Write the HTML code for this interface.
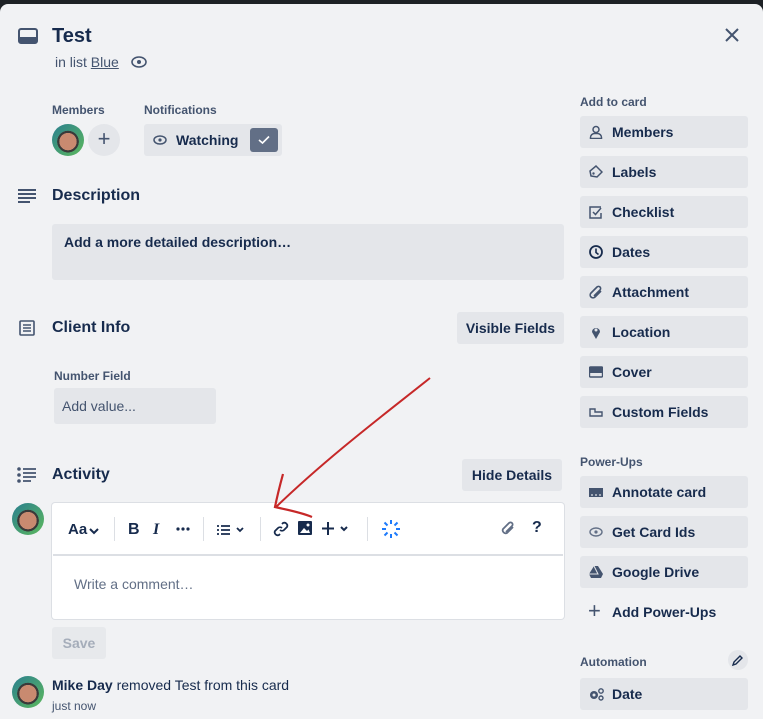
<!DOCTYPE html><html style="width:763px;height:719px;overflow:hidden"><head><style>
*{box-sizing:border-box;margin:0;padding:0}
body{width:763px;height:719px;overflow:hidden;background:#1d2125;font-family:"Liberation Sans",sans-serif;color:#172b4d;position:relative}
.card{position:absolute;left:0;top:4px;width:763px;height:715px;background:#f1f2f4;border-radius:8px 8px 0 0;overflow:hidden}
.a{position:absolute}
.b{position:absolute;background:#e4e6ea;border-radius:3px;font-size:14px;font-weight:bold;color:#172b4d}
.sb{left:580px;width:168px;height:32px;padding-left:32px;line-height:32px}
.sb svg{position:absolute;left:9px;top:9px}
.lbl{font-size:12px;font-weight:bold;color:#44546f}
.h{font-size:16px;font-weight:bold}
.av{position:absolute;width:32px;height:32px;border-radius:50%;background:radial-gradient(circle at 50% 55%,#c98a70 0 36%,#3a3a3a 37% 45%,transparent 46%),linear-gradient(135deg,#2a7f8f,#5cb85c);overflow:hidden}
</style></head><body>
<div class="card">
<svg class="a" style="left:18px;top:24px" width="20" height="16"><rect x="1" y="1" width="18" height="14" rx="2" fill="none" stroke="#44546f" stroke-width="2"/><rect x="1" y="9" width="18" height="6" fill="#44546f"/></svg>
<div class="a" style="left:52px;top:21px;font-size:20px;font-weight:bold">Test</div>
<div class="a" style="left:55px;top:50px;font-size:14px;color:#44546f">in list <u>Blue</u></div>
<svg class="a" style="left:131px;top:52px" width="16" height="12"><ellipse cx="8" cy="6" rx="7" ry="5" fill="none" stroke="#44546f" stroke-width="1.6"/><circle cx="8" cy="6" r="2" fill="#44546f"/></svg>
<svg class="a" style="left:725px;top:24px" width="14" height="14"><path d="M1 1L13 13M13 1L1 13" stroke="#44546f" stroke-width="2"/></svg>
<div class="a lbl" style="left:52px;top:99px">Members</div>
<div class="a lbl" style="left:144px;top:99px">Notifications</div>
<div class="av" style="left:52px;top:120px"></div>
<div class="a" style="left:88px;top:120px;width:32px;height:32px;border-radius:50%;background:#e4e6ea;text-align:center;line-height:30px;font-size:22px;color:#44546f">+</div>
<div class="b" style="left:144px;top:120px;width:138px;height:32px;line-height:32px;padding-left:32px">Watching</div>
<svg class="a" style="left:153px;top:131px" width="14" height="10"><ellipse cx="7" cy="5" rx="6" ry="4" fill="none" stroke="#44546f" stroke-width="1.5"/><circle cx="7" cy="5" r="1.6" fill="#44546f"/></svg>
<div class="a" style="left:250px;top:124px;width:28px;height:24px;background:#626f86;border-radius:3px"></div>
<svg class="a" style="left:258px;top:131px" width="12" height="10"><path d="M1 5L4.5 8L11 1.5" fill="none" stroke="#fff" stroke-width="1.6"/></svg>
<svg class="a" style="left:18px;top:185px" width="18" height="14"><path d="M0 1H18M0 5H18M0 9H18M0 13H12" stroke="#44546f" stroke-width="2"/></svg>
<div class="a h" style="left:52px;top:183px">Description</div>
<div class="b" style="left:52px;top:220px;width:512px;height:56px;padding:10px 12px;font-size:14px">Add a more detailed description…</div>
<svg class="a" style="left:19px;top:316px" width="16" height="16"><rect x="1" y="1" width="14" height="14" rx="1" fill="none" stroke="#44546f" stroke-width="1.6"/><path d="M4 5H12M4 8H12M4 11H12" stroke="#44546f" stroke-width="1.4"/></svg>
<div class="a h" style="left:52px;top:315px">Client Info</div>
<div class="b" style="left:457px;top:308px;width:107px;height:32px;line-height:32px;text-align:center">Visible Fields</div>
<div class="a lbl" style="left:54px;top:365px">Number Field</div>
<div class="b" style="left:54px;top:384px;width:162px;height:36px;line-height:36px;padding-left:8px;font-weight:normal;color:#44546f">Add value...</div>
<svg class="a" style="left:17px;top:463px" width="20" height="16"><circle cx="2" cy="2" r="1.8" fill="#44546f"/><circle cx="2" cy="8" r="1.8" fill="#44546f"/><circle cx="2" cy="14" r="1.8" fill="#44546f"/><path d="M6 2H19M6 6H19M6 10H19M6 14H14" stroke="#44546f" stroke-width="1.8"/></svg>
<div class="a h" style="left:52px;top:462px">Activity</div>
<div class="b" style="left:462px;top:455px;width:100px;height:32px;line-height:32px;text-align:center">Hide Details</div>
<div class="av" style="left:12px;top:499px"></div>
<div class="a" style="left:52px;top:499px;width:512px;height:116px;background:#fff;border-radius:3px;box-shadow:0 0 0 1px #dcdfe4"></div>
<div class="a" style="left:53px;top:550px;width:510px;height:2px;background:#dcdfe4"></div>
<div class="a" style="left:68px;top:517px;font-size:15px;font-weight:bold">Aa</div>
<svg class="a" style="left:89px;top:523px" width="10" height="8"><path d="M1 2l4 4 4-4" stroke="#172b4d" stroke-width="2" fill="none"/></svg>
<div class="a" style="left:114px;top:513px;width:1px;height:24px;background:#dcdfe4"></div>
<div class="a" style="left:128px;top:517px;font-size:16px;font-weight:bold">B</div>
<div class="a" style="left:153px;top:517px;font-size:16px;font-family:'Liberation Serif';font-style:italic;font-weight:bold">I</div>
<svg class="a" style="left:176px;top:523px" width="14" height="4"><circle cx="2" cy="2" r="1.6" fill="#172b4d"/><circle cx="7" cy="2" r="1.6" fill="#172b4d"/><circle cx="12" cy="2" r="1.6" fill="#172b4d"/></svg>
<div class="a" style="left:203px;top:513px;width:1px;height:24px;background:#dcdfe4"></div>
<svg class="a" style="left:217px;top:521px" width="30" height="10"><path d="M0 1h2M0 5h2M0 9h2M4 1h9M4 5h9M4 9h9M20 3l3 3 3-3" stroke="#172b4d" stroke-width="1.8" fill="none"/></svg>
<div class="a" style="left:260px;top:513px;width:1px;height:24px;background:#dcdfe4"></div>
<svg class="a" style="left:273px;top:517px" width="16" height="16"><path d="M7 9a3 3 0 0 0 4 0l3-3a3 3 0 0 0-4-4l-1 1M9 7a3 3 0 0 0-4 0l-3 3a3 3 0 0 0 4 4l1-1" fill="none" stroke="#172b4d" stroke-width="1.8"/></svg>
<svg class="a" style="left:298px;top:517px" width="14" height="14"><rect width="14" height="14" rx="1" fill="#172b4d"/><path d="M2 12L6 7L9 10L10.5 8.5L12 12Z" fill="#fff"/><circle cx="10" cy="4" r="1.5" fill="#fff"/></svg>
<svg class="a" style="left:322px;top:518px" width="28" height="14"><path d="M6 0V13M0 6.5H12M19 5l3 3 3-3" stroke="#172b4d" stroke-width="2" fill="none"/></svg>
<div class="a" style="left:367px;top:513px;width:1px;height:24px;background:#dcdfe4"></div>
<svg class="a" style="left:382px;top:516px" width="18" height="18"><path d="M9 0v4M9 14v4M0 9h4M14 9h4M2.5 2.5l3 3M12.5 12.5l3 3M15.5 2.5l-3 3M5.5 12.5l-3 3" stroke="#1d7afc" stroke-width="2"/></svg>
<svg class="a" style="left:500px;top:516px" width="16" height="17"><path d="M13 7L7 13a3 3 0 0 1-4-4l6-6a2 2 0 0 1 3 3L6 12" fill="none" stroke="#626f86" stroke-width="1.8"/></svg>
<div class="a" style="left:532px;top:515px;font-size:16px;font-weight:bold">?</div>
<div class="a" style="left:74px;top:572px;font-size:14px;color:#626f86">Write a comment…</div>
<div class="b" style="left:52px;top:623px;width:54px;height:32px;line-height:32px;text-align:center;color:#a5adba;background:#e7e9ec">Save</div>
<div class="av" style="left:12px;top:672px"></div>
<div class="a" style="left:52px;top:673px;font-size:14px"><b>Mike Day</b> removed Test from this card</div>
<div class="a" style="left:52px;top:695px;font-size:12px;color:#44546f">just now</div>

<div class="a lbl" style="left:580px;top:91px">Add to card</div>
<div class="b sb" style="top:112px"><svg width="14" height="14"><circle cx="7" cy="4.5" r="3" fill="none" stroke="#44546f" stroke-width="1.5"/><path d="M1.5 13.5v-1a4 4 0 0 1 4-4h3a4 4 0 0 1 4 4v1z" fill="none" stroke="#44546f" stroke-width="1.5"/></svg>Members</div>
<div class="b sb" style="top:152px"><svg width="14" height="14"><path d="M7 1L13 7 8 12 2 11 1 6Z" fill="none" stroke="#44546f" stroke-width="1.5"/><circle cx="4.5" cy="8.5" r="1.2" fill="#44546f"/></svg>Labels</div>
<div class="b sb" style="top:192px"><svg width="14" height="14"><path d="M12 2H1V13H12V8" fill="none" stroke="#44546f" stroke-width="1.5"/><path d="M4 7l2.5 2.5L12 3" fill="none" stroke="#44546f" stroke-width="1.5"/></svg>Checklist</div>
<div class="b sb" style="top:232px"><svg width="14" height="14"><circle cx="7" cy="7" r="6" fill="none" stroke="#172b4d" stroke-width="1.8"/><path d="M7 3.5V7.5L9.5 9.5" fill="none" stroke="#172b4d" stroke-width="1.6"/></svg>Dates</div>
<div class="b sb" style="top:272px"><svg width="14" height="14"><path d="M12 6L6 12a2.8 2.8 0 0 1-4-4l6-6a2 2 0 0 1 3 3L5 11" fill="none" stroke="#44546f" stroke-width="1.6"/></svg>Attachment</div>
<div class="b sb" style="top:312px"><svg width="14" height="14"><path d="M7 14L3 7a4 4 0 1 1 8 0Z" fill="#44546f"/><circle cx="7" cy="5" r="1.5" fill="#e4e6ea"/></svg>Location</div>
<div class="b sb" style="top:352px"><svg width="14" height="14"><rect x="0.5" y="2" width="13" height="10" rx="1" fill="none" stroke="#44546f" stroke-width="1.4"/><rect x="1" y="2" width="12" height="6" fill="#44546f"/></svg>Cover</div>
<div class="b sb" style="top:392px"><svg width="14" height="14"><path d="M1 4V11H13V7H6V4Z" fill="none" stroke="#44546f" stroke-width="1.4"/></svg>Custom Fields</div>
<div class="a lbl" style="left:580px;top:451px">Power-Ups</div>
<div class="b sb" style="top:472px"><svg width="14" height="14"><rect x="0" y="3" width="14" height="9" fill="#44546f"/><path d="M2 10h2M6 10h2M10 10h2" stroke="#fff"/></svg>Annotate card</div>
<div class="b sb" style="top:512px"><svg width="14" height="14"><ellipse cx="7" cy="7" rx="6" ry="4" fill="none" stroke="#626f86" stroke-width="1.4"/><circle cx="7" cy="7" r="1.6" fill="#626f86"/></svg>Get Card Ids</div>
<div class="b sb" style="top:552px"><svg width="14" height="14"><path d="M5 1h4l5 8-2 4H2L0 9Z" fill="#44546f"/><path d="M5 1L9 9H0M9 9L5 1" fill="none" stroke="#e4e6ea" stroke-width="1"/></svg>Google Drive</div>
<div class="a" style="left:580px;top:592px;width:168px;height:32px;line-height:32px;padding-left:32px;font-size:14px;font-weight:bold"><span class="a" style="left:8px;top:-1px;font-size:22px;font-weight:normal;color:#44546f">+</span>Add Power-Ups</div>
<div class="a lbl" style="left:580px;top:651px">Automation</div>
<div class="a" style="left:728px;top:646px;width:20px;height:20px;border-radius:50%;background:#e4e6ea"></div>
<svg class="a" style="left:732px;top:650px" width="12" height="12"><path d="M1 11L2 8 8 2 10 4 4 10Z" fill="none" stroke="#172b4d" stroke-width="1.4"/></svg>
<div class="b sb" style="top:674px"><svg width="16" height="14"><circle cx="5" cy="8" r="4" fill="#44546f"/><circle cx="5" cy="8" r="1.5" fill="#e4e6ea"/><circle cx="12" cy="4" r="2.2" fill="none" stroke="#44546f" stroke-width="1.4"/><circle cx="12" cy="11" r="2" fill="none" stroke="#44546f" stroke-width="1.4"/></svg>Date</div>
</div>
<svg class="a" style="left:0;top:0" width="763" height="719"><path d="M430 378C390 410 330 455 276 507" fill="none" stroke="#c62828" stroke-width="2"/><path d="M283 474C280 485 277 497 275 507C288 510 300 512 312 517" fill="none" stroke="#c62828" stroke-width="2.2"/></svg>
</body></html>
